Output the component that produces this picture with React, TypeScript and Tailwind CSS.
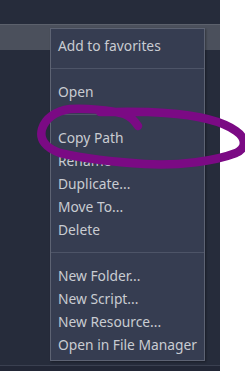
import React from "react";

const items: (string | null)[] = [
  "Add to favorites",
  null,
  "Open",
  null,
  "Copy Path",
  "Rename",
  "Duplicate...",
  "Move To...",
  "Delete",
  null,
  "New Folder...",
  "New Script...",
  "New Resource...",
  "Open in File Manager",
];

export default function App() {
  return (
    <div
      className="relative flex w-[245px] h-[371px] overflow-hidden bg-white"
      style={{ fontFamily: '"Noto Sans", "Open Sans", sans-serif' }}
    >
      <div className="flex flex-col w-[220px] h-full bg-[#262c3b]">
        <div className="h-[24px]" />
        <div className="h-[26px] bg-[#4b505c] border-t border-[#5c616c]" />
        <div className="flex-1" />
        <div className="h-[1px] bg-[#3a4050]" />
        <div className="h-[5px] bg-[#222736]" />
      </div>

      <div className="absolute left-[50px] top-[28px] w-[155px] h-[333px] bg-[#363d51] border border-[#5d6373] pt-[5px] shadow-[1px_1px_2px_rgba(0,0,0,0.35)]">
        {items.map((it, i) =>
          it === null ? (
            <div key={i} className="h-[23px] flex items-center">
              <div className="w-full h-[1px] bg-[#4d5467]" />
            </div>
          ) : (
            <div
              key={i}
              className="h-[23px] flex items-center pl-[7px] text-[13.8px] leading-[23px] text-[#c9ccd2] whitespace-nowrap"
            >
              {it}
            </div>
          )
        )}
      </div>

      <svg
        className="absolute left-0 top-0 pointer-events-none"
        width="245"
        height="371"
        viewBox="0 0 245 371"
      >
        <path
          d="M138 126 C134 120 130 116 124 114 C110 110 85 108 70 109 C55 111 45 119 42 129 C39 140 46 148 60 153 C82 158 112 162 145 164 C180 166 215 161 236 153 C247 148 246 138 236 131 C222 121 195 115 165 113 C140 111 120 112 100 112"
          fill="none"
          stroke="#7b0a84"
          strokeWidth="8.5"
          strokeLinecap="round"
          strokeLinejoin="round"
        />
      </svg>
    </div>
  );
}
